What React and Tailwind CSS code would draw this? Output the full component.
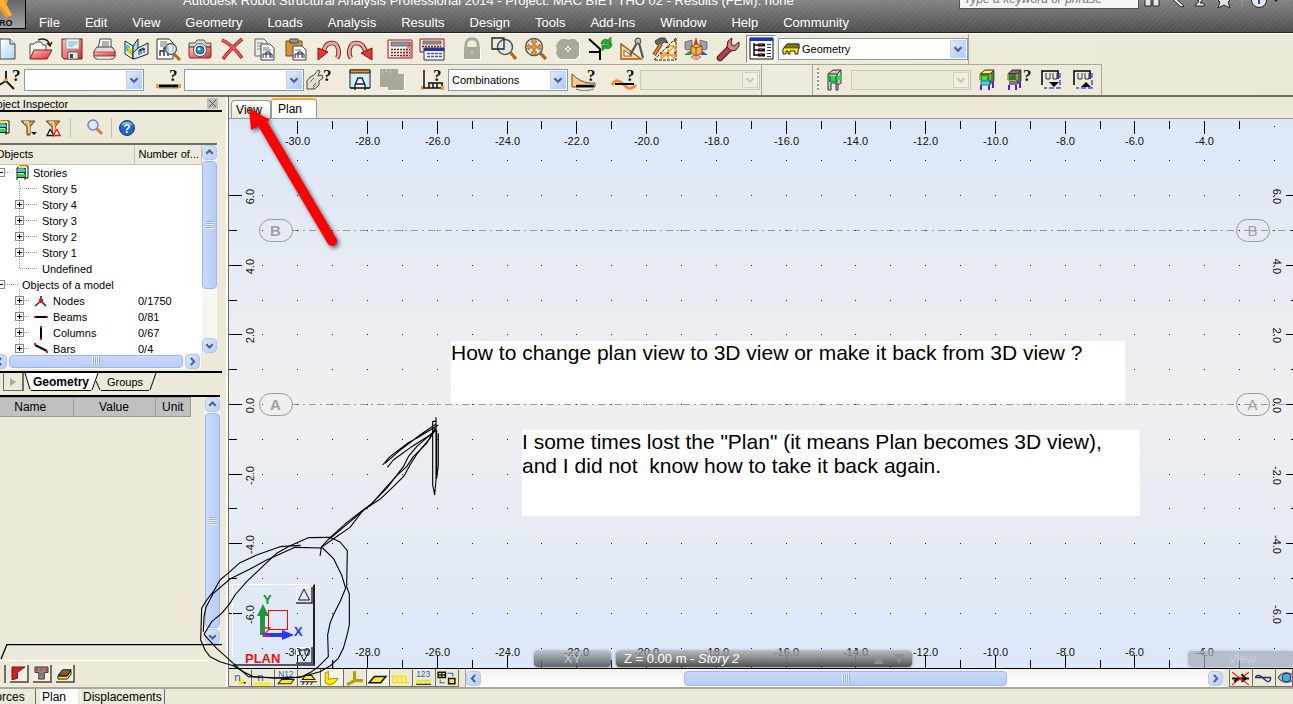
import React from "react";

const icons = {
  new: (
    <g>
      <path d="M3 1h10l5 5v15H3z" fill="url(#paper)" stroke="#444" />
      <path d="M13 1v5h5" fill="#d8e8f8" stroke="#444" />
    </g>
  ),
  open: (
    <g>
      <path d="M1 20V6h4l2-2h5l2 3h3v13z" fill="#f6fafc" stroke="#444" />
      <path d="M5 12h18l-5 9H1z" fill="url(#red)" stroke="#8d1313" />
      <path d="M9 2c5-2 10-1 12 5m-3-2 3 3 2-4" fill="none" stroke="#222" strokeWidth="1.4" />
    </g>
  ),
  save: (
    <g>
      <path d="M1 1h20v20H3l-2-2z" fill="url(#red)" stroke="#7a1515" />
      <path d="M5 1h13v10H5z" fill="#e9f4fb" stroke="#90a4b0" />
      <path d="M7 4h9M7 6h9M7 8h6" stroke="#79b2c4" />
      <path d="M7 14h10v7H7z" fill="#dfe8ee" stroke="#666" />
      <path d="M9 16h3v4H9z" fill="#444" />
    </g>
  ),
  print: (
    <g>
      <path d="M5 11 7 1h11v10z" fill="#fff" stroke="#444" />
      <path d="M9 4h7M9 6h7M9 8h7" stroke="#666" />
      <path d="M1 13l3-4h15l3 4v6l-2 2H3l-2-2z" fill="#e9d9d6" stroke="#444" />
      <path d="M1 14h21v4H1z" fill="url(#red)" stroke="#8d2525" strokeWidth=".7" />
      <path d="M4 20h14" stroke="#fff" />
    </g>
  ),
  book: (
    <g>
      <path d="M0 3l8 5v13l-8-5z" fill="#fff" stroke="#222" />
      <path d="M1 6l4 2v7l-4-2z" fill="#2ed0dd" />
      <path d="M3 9l4 3v6l-4-3z" fill="#d8cc2b" />
      <path d="M8 21V8l5-7v12z" fill="#9fdcf6" stroke="#222" />
      <path d="M8 21v-6l5-5 10-5v11l-11 4z" fill="#d6e9f5" stroke="#222" />
      <path d="M14 17v-5l5-2v5m-3 1v-5m-2 2l6-2" stroke="#234" fill="none" />
    </g>
  ),
  preview: (
    <g>
      <path d="M0 1h12l4 4v16H0z" fill="#fff" stroke="#333" />
      <path d="M3 4h7M3 6h8M3 8h6" stroke="#777" />
      <path d="M3 18v-5h4v-3h4v8M7 18v-5" stroke="#222" fill="none" strokeWidth="1.300" />
      <circle cx="14" cy="11" r="5.500" fill="#cfe7f5" fillOpacity=".7" stroke="#555" strokeWidth="1.3" />
      <path d="M17 16l6 6" stroke="#a56a22" strokeWidth="3" />
    </g>
  ),
  camera: (
    <g>
      <path d="M0 5h6l2-3h7l2 3h5v4H0z" fill="#d6d9db" stroke="#555" />
      <path d="M0 9h22v9l-1 2H1l-1-2z" fill="url(#red)" stroke="#8b2020" />
      <circle cx="11" cy="12" r="6.5" fill="#eef4f7" stroke="#555" />
      <circle cx="11" cy="12" r="4" fill="#2c86b8" stroke="#174c73" />
      <circle cx="10" cy="11" r="1.5" fill="#bfefff" />
      <path d="M17 6h4v2h-4z" fill="#fff" stroke="#666" strokeWidth=".6" />
    </g>
  ),
  del: (
    <g>
      <path d="M1 2c7 3 15 11 20 18" stroke="#7d1010" strokeWidth="3.400" fill="none" />
      <path d="M21 1C13 8 7 14 2 21" stroke="#7d1010" strokeWidth="3.400" fill="none" />
      <path d="M1 2c7 3 15 11 20 18M21 1C13 8 7 14 2 21" stroke="#f25656" strokeWidth="2" fill="none" />
    </g>
  ),
  copy: (
    <g>
      <path d="M2 1h9l3 3v14H2z" fill="#e6eef2" stroke="#666" />
      <path d="M4 5h6M4 8h5M4 11h4" stroke="#888" />
      <path d="M8 6h9l4 4v12H8z" fill="#f4fafd" stroke="#444" />
      <path d="M10 10h6M10 12h8" stroke="#777" />
      <path d="M10 20v-4h9v4M13 20v-6h4v6" stroke="#223" fill="none" />
    </g>
  ),
  paste: (
    <g>
      <path d="M1 3h16v15H1z" fill="#d6923b" stroke="#774a15" />
      <path d="M5 1h8v4H5z" fill="#999" stroke="#444" />
      <path d="M8 8h9l4 4v10H8z" fill="#f4fafd" stroke="#444" />
      <path d="M10 12h6" stroke="#777" />
      <path d="M10 20v-4h9v4M13 20v-6h4v6" stroke="#223" fill="none" />
    </g>
  ),
  undo: (
    <g>
      <path d="M20 20c3-4 2-15-5-15-6 0-7 4-9 9" fill="none" stroke="#5e2020" strokeWidth="4.600" />
      <path d="M20 20c3-4 2-15-5-15-6 0-7 4-9 9" fill="none" stroke="#f3a3a0" strokeWidth="2.800" />
      <path d="M1 10l10 4-10 8z" fill="#e33" stroke="#7a1a1a" />
    </g>
  ),
  redo: (
    <g>
      <path d="M2 20C-1 16 0 5 7 5c6 0 8 4 10 9" fill="none" stroke="#5e2020" strokeWidth="4.600" />
      <path d="M2 20C-1 16 0 5 7 5c6 0 8 4 10 9" fill="none" stroke="#f3a3a0" strokeWidth="2.800" />
      <path d="M23 10l-11 5 11 7z" fill="#e33" stroke="#7a1a1a" />
    </g>
  ),
  calc: (
    <g>
      <path d="M-1 2h24v18H-1z" fill="#f8ecea" stroke="#8b1f1f" />
      <path d="M23 2v18H10z" fill="#e05b5b" opacity=".7" />
      <path d="M2 4h19v4H2z" fill="#8c9692" stroke="#444" strokeWidth=".6" />
      <path d="M2 11.5h19M2 14.5h19M2 17.5h19" stroke="#fff" strokeWidth="2" />
      <path d="M2 11.5h19M2 14.5h19M2 17.5h19" stroke="#722" strokeWidth="1.4" strokeDasharray="2 1" />
    </g>
  ),
  calc2: (
    <g>
      <path d="M-1 1h24v13H-1z" fill="#f6dcdc" stroke="#8b1f1f" />
      <path d="M2 3h18v3H2z" fill="#8c9692" stroke="#444" strokeWidth=".6" />
      <path d="M1 8.500h19" stroke="#722" strokeWidth="1.4" strokeDasharray="2 1" />
      <path d="M3 10h20v12H3z" fill="#f3f4fb" stroke="#333" />
      <path d="M3 10h20v3H3z" fill="#2336a0" />
      <path d="M6 15.500h15M6 18.500h15" stroke="#4a57b0" strokeWidth="1.600" strokeDasharray="3 1" />
    </g>
  ),
  lock: (
    <g>
      <path d="M5 11V6c0-7 12-7 12 0v5" fill="none" stroke="#aca899" strokeWidth="3" />
      <path d="M3 9h16v12H3z" fill="#aca899" />
      <path d="M19.500 9v12.500H4" stroke="#fff" fill="none" />
      <path d="M11 13v4" stroke="#d8d5c8" />
    </g>
  ),
  zoom: (
    <g>
      <circle cx="12" cy="9" r="7.500" fill="#dfe6ea" stroke="#555" strokeWidth="1.500" />
      <path d="M-1 0h12v11H-1z" fill="none" stroke="#222" strokeWidth="1.300" />
      <path d="M17 14l6 7" stroke="#a56a22" strokeWidth="3.200" />
    </g>
  ),
  pan: (
    <g>
      <circle cx="9" cy="9" r="8.500" fill="#dce6ee" stroke="#555" strokeWidth="1.400" />
      <path d="M9 0l3 4h-2v4h4V6l4 3-4 3v-2h-4v4h2l-3 4-3-4h2v-4H4v2L0 9l4-3v2h4V4H6z" fill="#f3a427" stroke="#8c5409" strokeWidth=".7" />
      <path d="M15 15l6 6" stroke="#a56a22" strokeWidth="3.200" />
    </g>
  ),
  blob: (
    <g>
      <path d="M4 1h5l2 1 3-1h4l4 4v12l-3 4H4l-3-2-2-4 1-3-1-4 2-4z" fill="#aca899" />
      <path d="M22.500 6v12l-3 3.500H5" fill="none" stroke="#fff" strokeDasharray="3 1" />
      <path d="M11 8v2m0 2v2M8 11h2m2 0h2" stroke="#fff" strokeWidth="1.500" />
    </g>
  ),
  axes: (
    <g>
      <path d="M0 1l11 10v11M0 14h11" fill="none" stroke="#000" strokeWidth="2" />
      <path d="M12 6c0-4 4-6 7-4l3-3v7h-7l2-2c-2 0-3 1-3 2z" fill="#1fae2d" stroke="#0b6d17" strokeWidth=".6" />
      <path d="M23 6c0 4-4 6-7 4l-3 3V7h6l-2 2c2 0 3-1 3-3z" fill="#1fae2d" stroke="#0b6d17" strokeWidth=".6" />
    </g>
  ),
  triangle: (
    <g>
      <path d="M0 6v15h20z" fill="#f9d9a0" stroke="#9a5b14" strokeWidth="1.400" />
      <path d="M3 12v6h8z" fill="#fff" stroke="#9a5b14" />
      <circle cx="17" cy="3" r="3" fill="#bbb" stroke="#444" />
      <path d="M16 5L9 17M18 5l4 15" stroke="#555" strokeWidth="2.200" />
    </g>
  ),
  hammer: (
    <g>
      <path d="M23 0v22H1z" fill="#fff6e0" stroke="#222" strokeDasharray="3 1" />
      <path d="M8 21v-6h7v6m0-7V8h7v13M8 17h14M8 21l7-6 7 6M15 14l7-6" fill="none" stroke="#e79a2a" strokeWidth="1.300" />
      <path d="M7 14h2v2H7zM14 8h2v2h-2zM14 14h2v2h-2zM21 14h2v2h-2zM21 2h2v2h-2z" fill="#e22" />
      <path d="M2 3l5-3h5l3 5-4-1-2 2-3 1-3-1z" fill="#666" stroke="#222" strokeWidth=".700" />
      <path d="M8 6L1 17" stroke="#7a421a" strokeWidth="4" />
      <path d="M8 6L1 17" stroke="#d98a3d" strokeWidth="2" />
    </g>
  ),
  cube: (
    <g>
      <path d="M0 4l7-2v9l-5 1-2-1zM22 4l-7-2v9l5 1 2-1z" fill="#9aa3ab" stroke="#555" strokeWidth=".700" />
      <path d="M11 -1l2 7H9z" fill="#d22" />
      <path d="M-1 17l7-5v5z" fill="#2b9c3a" />
      <path d="M23 17l-7-5v5z" fill="#2f53d8" />
      <path d="M6 19l5 3 5-3-5-3z" fill="#f1a7a7" stroke="#c44" strokeWidth=".600" />
      <path d="M6 8l5-2 6 2v7l-6 3-5-3z" fill="#f4b14a" stroke="#8a5310" />
      <path d="M6 8l5 2 6-2M11 10v8" fill="none" stroke="#8a5310" />
    </g>
  ),
  wrench: (
    <g>
      <path d="M3 20l9-9" stroke="#4e1414" strokeWidth="6.500" strokeLinecap="round" />
      <path d="M3 20l9-9" stroke="#a84848" strokeWidth="4.500" strokeLinecap="round" />
      <path d="M15 0l-4 3-1 6 4 4 5-1 3-4V4l-5 4-2-1-1-2z" fill="#d58784" stroke="#4e1414" />
    </g>
  ),
  tree: (
    <g>
      <path d="M0 0h23v21H0z" fill="#fff" stroke="#111" />
      <path d="M0 0h23v3H0z" fill="#1533c8" />
      <path d="M4 5v13M4 7h5M4 12h5M4 17h5" stroke="#000" fill="none" strokeWidth="1.400" />
      <path d="M8 7h7M8 12h7M8 17h7" stroke="#000" strokeWidth="3" />
      <path d="M9 6h3M9 11h3M9 16h3" stroke="#e23" strokeWidth="1.500" />
      <path d="M17 6.500h4M17 9.500h4M17 12.500h4M17 15.500h4M17 18.500h4" stroke="#1533c8" />
    </g>
  ),
  nodeQ: (
    <g>
      <path d="M9 2v8M9 12L2 16M9 12l8 8" stroke="#111" strokeWidth="1.800" />
      <circle cx="9" cy="11" r="1.800" fill="#f08a1d" />
    </g>
  ),
  barQ: (
    <g>
      <path d="M1 17h21" stroke="#000" strokeWidth="3" />
      <path d="M-1 15h3v4h-3zM21 15h3v4h-3z" fill="#f39a2b" />
      <path d="M2 19.500h19" stroke="#b9b5a5" />
    </g>
  ),
  hand: (
    <g>
      <path d="M-2 20v-8l3-4 4-2 4-5 2 1-2 5 4-1 1 3-4 3v4l-4 4z" fill="#e3dfcf" stroke="#444" />
      <path d="M1 13l4-4M4 17l3-3M3 20l4-4" stroke="#666" />
    </g>
  ),
  win: (
    <g>
      <path d="M1 1h20v18H1z" fill="#c9effa" stroke="#222" />
      <path d="M1 1h20v3H1z" fill="#f08d2d" stroke="#222" />
      <path d="M6 21v-5l3-7h4l3 7v5M6 15h10M1 19h20" fill="#fff" fillOpacity=".5" stroke="#222" strokeWidth="1.400" />
    </g>
  ),
  grey: (
    <g>
      <path d="M-1 0h18v5h6v16H7v-3H-1z" fill="#aca899" />
      <path d="M23.500 6v15.500H9" fill="none" stroke="#fff" />
      <path d="M1 3h1M5 2h1M9 3h1" stroke="#fff" />
    </g>
  ),
  loadQ: (
    <g>
      <path d="M3 1v18M0 19h22M7 14h15M8 14v5M12 14v5M16 14v5M21 14v5" stroke="#111" strokeWidth="1.500" fill="none" />
      <path d="M0 17h2v4H0zM20 17h3v4h-3z" fill="#f39a2b" />
    </g>
  ),
  momentQ: (
    <g>
      <path d="M-1 5v13h23v-4C12 15 5 11-1 5z" fill="#f6c98a" stroke="#7a4a12" />
      <path d="M3 17h18" stroke="#000" strokeWidth="2.400" />
      <path d="M3 20c5 2 12 2 18 0" fill="none" stroke="#777" />
    </g>
  ),
  deflQ: (
    <g>
      <path d="M-1 16c4-7 8-4 12 0s7 5 12 0" fill="none" stroke="#f08d2d" strokeWidth="3" />
      <path d="M2 15h19" stroke="#000" strokeWidth="2" />
    </g>
  ),
  frameG: (
    <g>
      <path d="M4 5l5-4h8v13l-3 2v5h-2v-7H7v7H4z" fill="#c3c7bf" stroke="#333" />
      <path d="M4 5h9l4-4M13 5v11" fill="none" stroke="#333" />
      <path d="M5 7h8v6H5z" fill="#1b9a32" />
      <path d="M7 7h4v5H7z" fill="#1fe04a" />
      <path d="M13 8l4-2v4l-4 2z" fill="#1fe04a" />
    </g>
  ),
  frameY: (
    <g>
      <path d="M4 5l5-4h9l-4 4z" fill="#fbf04a" stroke="#333" />
      <path d="M4 5h10v6H4zM14 5l4-4v11l-4 3z" fill="#2c8b45" stroke="#333" strokeWidth=".800" />
      <path d="M4 5v6M14 5v6" stroke="#e8a325" strokeWidth="1.500" />
      <path d="M6 7h5v4H6z" fill="#2df32d" />
      <path d="M5 12h9v4H5z" fill="#28e3e9" stroke="#155" strokeWidth=".700" />
      <path d="M5 16v5M13 16v5M17 13v6" stroke="#6d10d8" strokeWidth="2" />
    </g>
  ),
  frameQ: (
    <g>
      <path d="M0 5l4-4h9l-4 4z" fill="#777" stroke="#333" />
      <path d="M0 5h9v6H0zM9 5l4-4v11l-4 3z" fill="#5c6a58" stroke="#333" strokeWidth=".800" />
      <path d="M0 5v6M9 5v6" stroke="#e8a325" strokeWidth="1.500" />
      <path d="M2 7h5v4H2z" fill="#118a1b" />
      <path d="M1 12h8v4H1z" fill="#777" />
      <path d="M1 16v5M8 16v5M12 13v6" stroke="#6d10d8" strokeWidth="2" />
    </g>
  ),
  boxDown: (
    <g>
      <path d="M2 16V2h16v8" fill="none" stroke="#000" strokeWidth="1.500" />
      <path d="M20 4v15H4" fill="none" stroke="#4a4cf5" strokeWidth="1.500" strokeDasharray="5 2" />
      <path d="M6 4v6h4V4m3 0v6h4V4" fill="none" stroke="#335" />
      <path d="M9 13h10l-5 5z" fill="#000" />
    </g>
  ),
  boxUp: (
    <g>
      <path d="M2 16V2h16v8" fill="none" stroke="#000" strokeWidth="1.500" />
      <path d="M20 4v15H4" fill="none" stroke="#4a4cf5" strokeWidth="1.500" strokeDasharray="5 2" />
      <path d="M6 4v6h4V4m3 0v6h4V4" fill="none" stroke="#335" />
      <path d="M9 18h10l-5-5z" fill="#000" />
    </g>
  ),
};

const withMark = { nodeQ: 15, barQ: 12, hand: 14, loadQ: 12, momentQ: 14, deflQ: 13, frameQ: 15 };

function Icon({ name }) {
  return (
    <svg width="22" height="22" viewBox="0 0 22 22" className="shrink-0 overflow-visible" aria-hidden="true">
      {icons[name]}
      {name in withMark && (
        <text x={withMark[name]} y="12" fontFamily="Liberation Serif, serif" fontWeight="700" fontSize="17" fill="#111">
          ?
        </text>
      )}
    </svg>
  );
}

function Tool({ name, label }) {
  return (
    <button aria-label={label} className="flex h-7 w-8 shrink-0 items-center justify-center">
      <Icon name={name} />
    </button>
  );
}

function Chevron({ d = "M4 5l4 4 4-4" }) {
  return (
    <svg width="15" height="15" viewBox="0 0 16 15" aria-hidden="true">
      <path d={d} fill="none" stroke="currentColor" strokeWidth="2.500" />
    </svg>
  );
}

function Combo({ label, value = "", width, disabled, icon }) {
  return (
    <div
      className={`flex shrink-0 items-center border p-px ${width} ${
        disabled ? "h-5 border-[#c9c7ba] bg-[#ece9d8]" : "h-[22px] border-[#7f9db9] bg-white"
      }`}
    >
      {icon}
      <select
        aria-label={label}
        disabled={disabled}
        className="h-full min-w-0 flex-1 appearance-none bg-transparent px-0.5 text-[11px] leading-4 text-black outline-none"
      >
        <option>{value}</option>
      </select>
      <span
        className={`flex h-full w-4 shrink-0 items-center justify-center border ${
          disabled
            ? "border-[#d6d3c6] bg-[#f0eee3] text-[#c9c7ba]"
            : "border-[#c3d3fb] bg-linear-to-br from-[#e1eafe] to-[#aec8f7] text-[#4d6185]"
        }`}
      >
        <Chevron />
      </span>
    </div>
  );
}

function ScrollButton({ label, d }) {
  return (
    <button
      aria-label={label}
      className="flex h-[15px] w-[15px] shrink-0 items-center justify-center rounded-sm border border-[#b4c8f4] bg-linear-to-br from-[#dce6fd] to-[#b7cdf9] text-[#4d6185]"
    >
      <Chevron d={d} />
    </button>
  );
}

const UP = "M4 9l4-4 4 4";
const DOWN = "M4 6l4 4 4-4";
const LEFT = "M10 3L6 7.500l4 4.500";
const RIGHT = "M6 3l4 4.500-4 4.500";

function Grip({ vertical }) {
  return vertical ? (
    <span className="h-2 w-2 bg-[repeating-linear-gradient(0deg,#eef4fe_0_1px,#8cb0f8_1px_2px)]" />
  ) : (
    <span className="h-2 w-2 bg-[repeating-linear-gradient(90deg,#eef4fe_0_1px,#8cb0f8_1px_2px)]" />
  );
}

function VScroll({ thumb }) {
  return (
    <div className="flex w-[15px] shrink-0 flex-col bg-[#f7f6f1]">
      <ScrollButton label="Scroll up" d={UP} />
      <div className="min-h-0 flex-1 py-px">
        <div className={`flex items-center justify-center rounded-sm border border-[#9db8ee] bg-linear-to-r from-[#cad9fd] to-[#b8ccf8] ${thumb}`}>
          <Grip vertical />
        </div>
      </div>
      <ScrollButton label="Scroll down" d={DOWN} />
    </div>
  );
}

const menus = ["File", "Edit", "View", "Geometry", "Loads", "Analysis", "Results", "Design", "Tools", "Add-Ins", "Window", "Help", "Community"];

function Header() {
  return (
    <header className="flex h-[33px] shrink-0 overflow-hidden border-b border-[#222] bg-[repeating-linear-gradient(135deg,#ffffff0d_0_1px,transparent_1px_4px),linear-gradient(#848484,#6a6a6a_50%,#4e4e4e)] text-white">
      <div className="h-[29px] w-[26px] shrink-0 overflow-hidden border-r border-b border-black bg-linear-to-b from-[#666] to-[#a4a4a4]">
        <svg width="26" height="28" viewBox="0 0 26 28" aria-label="Robot PRO" role="img">
          <path d="M0 0h8L6 6l6 9-6 3-6-8z" fill="#ee9a1c" />
          <path d="M0 0h4l8 15-3 1L0 5z" fill="#f8b43a" />
          <text x="-7" y="26" fontFamily="Liberation Sans, Arial, sans-serif" fontWeight="700" fontSize="9" fill="#111">
            PRO
          </text>
        </svg>
      </div>
      <div className="flex min-w-0 flex-1 flex-col">
        <div className="flex h-[13px] items-end justify-between">
          <h1 className="mb-1 ml-[157px] text-[13px] leading-4 whitespace-pre">
            Autodesk Robot Structural Analysis Professional 2014 - Project: MAC BIET THO 02 - Results (FEM): none
          </h1>
          <div className="mb-1 flex items-end">
            <input
              aria-label="Search"
              placeholder="Type a keyword or phrase"
              className="h-5 w-[180px] border border-[#555] bg-[#f4f4f4] px-1 text-[12px] italic placeholder:text-[#777]"
            />
            <svg width="154" height="20" viewBox="0 0 154 20" aria-hidden="true">
              <g fill="#e8e8e8" stroke="#222" strokeWidth="1">
                <path d="M6 17v-6l2-3h4v9zM14 17V8h4l2 3v6z" />
                <path d="M31 8l3-1 11 10-3 1z" />
                <path d="M56 17h10l-2-3h-3l4-5-6-3-2 4 3 2z" />
                <path d="M85 2l2 7h6l-4 4 2 6-6-3-6 3 2-6-4-4h6z" />
                <circle cx="120" cy="11" r="7.500" />
              </g>
              <path d="M103 0v18" stroke="#999" />
              <path d="M120 9v6M120 5v2" stroke="#1d4fb5" strokeWidth="2" />
              <path d="M134 10h6l-3 3z" fill="#222" />
            </svg>
          </div>
        </div>
        <nav className="ml-[13px] flex gap-[25px] text-[13px] leading-5">
          {menus.map((m) => (
            <button key={m}>{m}</button>
          ))}
        </nav>
      </div>
    </header>
  );
}

const t1 = [["new", "New"], ["open", "Open"], ["save", "Save"], ["print", "Print"], ["book", "Printout composition"], ["preview", "Print preview"], ["camera", "Screen capture"], ["del", "Delete"], ["copy", "Copy"], ["paste", "Paste"], ["undo", "Undo"], ["redo", "Redo"]];
const t2 = [["calc", "Calculations"], ["calc2", "Calculation options"]];
const t3 = [["lock", "Lock"], ["zoom", "Zoom window"], ["pan", "Zoom all"], ["blob", "Restore"], ["axes", "Rotate axes"], ["triangle", "Edit"], ["hammer", "Analysis"], ["cube", "Attributes"], ["wrench", "Tools"]];

function Toolbars() {
  const draw = (list) => list.map(([n, l]) => <Tool key={n} name={n} label={l} />);
  return (
    <div className="shrink-0 overflow-hidden border-t border-b-2 border-t-white border-b-[#716f64] bg-linear-to-r from-[#f0eddf] to-[#ece9d8]">
      <div className="flex h-[30px] items-center">
        <div className="-ml-2 flex">{draw(t1)}</div>
        <div className="ml-2 flex">{draw(t2)}</div>
        <div className="ml-2 flex">{draw(t3)}</div>
        <button aria-label="Object inspector" className="ml-0.5 flex h-7 w-[30px] shrink-0 items-center justify-center border border-[#8a887c] border-r-white border-b-white bg-[#f4f2e8]">
          <Icon name="tree" />
        </button>
        <div className="ml-0.5 flex h-full items-center border-r border-[#aca899]">
          <Combo
            label="Layout"
            value="Geometry"
            width="w-[190px]"
            icon={
              <svg width="18" height="14" viewBox="0 0 18 14" className="ml-0.5 shrink-0" aria-hidden="true">
                <path d="M1 7l4-5h12v5l-1 1v4h-3V9H8v3H6V9H4v3H1z" fill="#ffef10" stroke="#222" />
                <path d="M5 2h12v4H2z" fill="#7c7a10" stroke="#222" strokeWidth=".6" />
              </svg>
            }
          />
        </div>
      </div>
      <div className="flex h-[31px] w-[1102px] items-center border-t border-r border-[#aca899]">
        <div className="-ml-2 flex"><Tool name="nodeQ" label="Select nodes" /></div>
        <Combo label="Nodes" width="w-[120px]" />
        <div className="ml-2 flex"><Tool name="barQ" label="Select bars" /></div>
        <Combo label="Bars" width="w-[120px]" />
        <Tool name="hand" label="Select special" />
        <div className="ml-2 flex">
          <Tool name="win" label="Filter" />
          <Tool name="grey" label="Restore selection" />
        </div>
        <div className="ml-2 flex"><Tool name="loadQ" label="Select cases" /></div>
        <Combo label="Cases" value="Combinations" width="w-[120px]" />
        <Tool name="momentQ" label="Select modes" />
        <div className="ml-2 flex"><Tool name="deflQ" label="Select components" /></div>
        <Combo label="Components" width="w-[120px]" disabled />
        <div className="ml-px h-full w-[52px] shrink-0 border-x border-[#aca899] bg-[#eeebdc]" />
        <div className="ml-1 h-6 w-0.5 shrink-0 bg-[repeating-linear-gradient(#9a988c_0_2px,#fff_2px_4px)]" />
        <Tool name="frameG" label="Story" />
        <Combo label="Stories" width="w-[120px]" disabled />
        <Tool name="frameY" label="Show story" />
        <Tool name="frameQ" label="Story selection" />
        <Tool name="boxDown" label="Story down" />
        <Tool name="boxUp" label="Story up" />
      </div>
    </div>
  );
}

const DOT = { stroke: "#999", strokeDasharray: "1 1", fill: "none" };

function Expander({ x, minus }) {
  return (
    <g>
      <rect x={x - 4 + 0.5} y="3.500" width="8" height="8" fill="#fff" stroke="#8c8a7e" />
      <path d={minus ? `M${x - 2} 7.500h5` : `M${x - 2} 7.500h5M${x + 0.5} 5v5`} stroke="#000" />
    </g>
  );
}

const glyphs = {
  node: <path d="M41 3v5l-6 5M41 8l5 5" stroke="#222" strokeWidth="1.500" fill="none" />,
  beam: <path d="M35 8h12" stroke="#000" strokeWidth="2" />,
  column: <path d="M41 2v12" stroke="#000" strokeWidth="2" />,
  bar: <path d="M35 4l12 6" stroke="#000" strokeWidth="2" />,
};
const tips = {
  node: "M39 6h4v4h-4z",
  beam: "M34 7h2v2h-2zM46 7h2v2h-2z",
  column: "M40 1h2v2h-2zM40 13h2v2h-2z",
  bar: "M34 2h2v2h-2zM46 10h2v2h-2z",
};

function StoryIcon() {
  return (
    <g>
      <path d="M17 3l3-2h8v12h-3V3zM17 3v12M25 3v12" fill="#fff" stroke="#111" />
      <path d="M18 2l2-1h7l-2 2h-7z" fill="#ffef1f" />
      <path d="M18 4h7v3h-7z" fill="#19d8e8" />
      <path d="M18 9h7v3h-7z" fill="#20e030" />
      <path d="M17 7.500h8M17 12.500h8" stroke="#111" />
    </g>
  );
}

const tree = [
  { label: "Stories", kind: "root" },
  { label: "Story 5", kind: "leaf" },
  { label: "Story 4", kind: "story" },
  { label: "Story 3", kind: "story" },
  { label: "Story 2", kind: "story" },
  { label: "Story 1", kind: "story" },
  { label: "Undefined", kind: "last" },
  { label: "Objects of a model", kind: "model" },
  { label: "Nodes", kind: "object", glyph: "node", count: "0/1750" },
  { label: "Beams", kind: "object", glyph: "beam", count: "0/81" },
  { label: "Columns", kind: "object", glyph: "column", count: "0/67" },
  { label: "Bars", kind: "object", glyph: "bar", count: "0/4" },
];

const rowWidth = { root: 33, leaf: 42, story: 42, last: 42, model: 22, object: 53 };

function RowArt({ kind, glyph }) {
  const w = rowWidth[kind];
  return (
    <svg width={w} height="16" viewBox={`0 0 ${w} 16`} className="shrink-0" aria-hidden="true">
      {kind === "root" && (<><path d="M5 7.500h6" {...DOT} /><Expander x={0} minus /><StoryIcon /></>)}
      {kind === "model" && (<><path d="M5 7.500h13M19.500 12v4" {...DOT} /><Expander x={0} minus /></>)}
      {kind === "leaf" && <path d="M19.500 0v16M20 7.500h18" {...DOT} />}
      {kind === "last" && <path d="M19.500 0v8M20 7.500h18" {...DOT} />}
      {kind === "story" && (<><path d="M19.500 0v16M20 7.500h18" {...DOT} /><Expander x={19} /></>)}
      {kind === "object" && (
        <>
          <path d="M19.500 0v16M20 7.500h10" {...DOT} />
          <Expander x={19} />
          {glyphs[glyph]}
          <path d={tips[glyph]} fill="#e11" />
        </>
      )}
    </svg>
  );
}

function Inspector() {
  return (
    <aside className="flex w-[228px] shrink-0 flex-col overflow-hidden border-r-2 border-white text-[11px]">
      <div className="mr-1 flex h-[15px] items-center justify-between border-b-2 border-black">
        <h2 className="-ml-3 leading-3">Object Inspector</h2>
        <button aria-label="Close" className="mr-1 flex h-[11px] w-[11px] items-center justify-center bg-[#c0bfb8]">
          <svg width="7" height="7" viewBox="0 0 7 7"><path d="M0 0l7 7M7 0L0 7" stroke="#555" /></svg>
        </button>
      </div>
      <div className="flex h-[31px] items-center">
        <button aria-label="Stories" className="w-4">
          <svg width="10" height="16" viewBox="19 0 10 16"><StoryIcon /></svg>
        </button>
        {["Filter", "Filter selection"].map((l, i) => (
          <button key={l} aria-label={l} className="flex w-[25px] justify-center">
            <svg width="18" height="18" viewBox="0 0 18 18">
              <path d="M1 2h14l-5 6v8H7V8z" fill="#c79a4b" stroke="#6b4815" />
              <path d="M4 3h4l1 5v6" fill="none" stroke="#f6e0ac" strokeWidth="1.500" />
              {i === 0 ? (
                <path d="M11 13h6l-3 3z" fill="#111" />
              ) : (
                <>
                  <path d="M2 16.500l3-6 4 6z" fill="#fff" stroke="#111" strokeWidth="1.300" />
                  <path d="M8 16.500l4-6 3 6z" fill="#fff" stroke="#d11" strokeWidth="1.300" />
                </>
              )}
            </svg>
          </button>
        ))}
        <span className="ml-1 h-5 w-px bg-[#c5c2b2]" />
        <button aria-label="Find" className="ml-4 w-4">
          <svg width="17" height="17" viewBox="0 0 17 17">
            <path d="M9 9l6 6" stroke="#c48a2b" strokeWidth="3" />
            <circle cx="6" cy="6" r="5" fill="#d9e8fb" stroke="#7388b8" strokeWidth="1.500" />
          </svg>
        </button>
        <span className="ml-2 h-5 w-px bg-[#c5c2b2]" />
        <button aria-label="Help" className="ml-[7px]">
          <svg width="16" height="16" viewBox="0 0 16 16">
            <circle cx="8" cy="8" r="7.500" fill="#2563c4" stroke="#123c86" />
            <path d="M3 5a6 5 0 0 1 10 0" stroke="#8fb8f0" strokeWidth="2" fill="none" />
            <text x="8" y="12.500" textAnchor="middle" fontFamily="Liberation Sans, sans-serif" fontWeight="700" fontSize="12" fill="#fff">?</text>
          </svg>
        </button>
      </div>
      <div className="mr-[9px] flex border-t-2 border-[#716f64] bg-white">
        <div className="h-[208px] min-w-0 flex-1 overflow-hidden">
          <table className="w-full table-fixed border-collapse text-left">
            <thead>
              <tr className="h-[19px] border-b border-[#cbc7b8] bg-[#ebeadb]">
                <th className="w-[134px] border-r border-[#c5c2b2] p-0 font-normal">
                  <span className="-ml-1">Objects</span>
                </th>
                <th className="border-r border-[#c5c2b2] p-0 pl-1 font-normal whitespace-nowrap">Number of...</th>
              </tr>
            </thead>
            <tbody>
              {tree.map((r) => (
                <tr key={r.label} className="h-4">
                  <td className="p-0">
                    <div className="flex h-4 items-center leading-4">
                      <RowArt kind={r.kind} glyph={r.glyph} />
                      <span className="whitespace-nowrap">{r.label}</span>
                    </div>
                  </td>
                  <td className="p-0 pl-1 leading-4">{r.count}</td>
                </tr>
              ))}
            </tbody>
          </table>
        </div>
        <VScroll thumb="h-[128px]" />
      </div>
      <div className="mr-[9px] flex h-4 items-center">
        <div className="flex h-full flex-1 items-center overflow-hidden bg-[#f7f6f1]">
          <div className="-ml-2 flex"><ScrollButton label="Scroll left" d={LEFT} /></div>
          <div className="ml-0.5 flex h-[13px] w-[174px] items-center justify-center rounded-sm border border-[#9db8ee] bg-linear-to-b from-[#cad9fd] to-[#b8ccf8]"><Grip /></div>
          <div className="ml-0.5 flex"><ScrollButton label="Scroll right" d={RIGHT} /></div>
        </div>
        <div className="w-4" />
      </div>
      <div className="mt-0.5 mr-1 flex h-5 items-stretch border-t-2 border-black">
        <button aria-label="Previous tab" className="w-1 border-r border-[#716f64]" />
        <button aria-label="Next tab" className="flex w-5 items-center justify-center border-r-2 border-b border-[#716f64]">
          <svg width="6" height="8" viewBox="0 0 6 8"><path d="M0 0l6 4-6 4z" fill="#aca899" /></svg>
        </button>
        <svg width="7" height="17" viewBox="0 0 7 17"><path d="M0 0h7v17H6z" fill="#fff" /><path d="M1 0l5 16.500" stroke="#000" fill="none" /></svg>
        <button className="border-b border-black bg-white px-0.5 text-[12px] leading-4 font-bold">Geometry</button>
        <svg width="10" height="18" viewBox="0 0 10 18"><path d="M0 0h7L2 17H0z" fill="#fff" /><path d="M7 0L1 17M5 8l4 9" stroke="#000" fill="none" /></svg>
        <button className="border-b border-black px-1.5 leading-4">Groups</button>
        <svg width="8" height="18" viewBox="0 0 8 18"><path d="M7 0L1 17" stroke="#000" fill="none" /></svg>
      </div>
      <div className="mt-1 mr-1.5 flex min-h-0 flex-1 justify-between border-t-2 border-black">
        <table className="h-5 w-[191px] table-fixed border-collapse bg-[#c0c0c0] text-[12px]">
          <thead>
            <tr className="border border-[#9a9a9a] border-l-0">
              <th className="w-[73px] border-r border-[#9a9a9a] p-0 pr-3 font-normal">Name</th>
              <th className="w-[82px] border-r border-[#9a9a9a] p-0 font-normal">Value</th>
              <th className="p-0 font-normal">Unit</th>
            </tr>
          </thead>
        </table>
        <VScroll thumb="h-full" />
      </div>
      <svg width="222" height="16" viewBox="0 0 222 16" className="shrink-0" aria-hidden="true">
        <path d="M1 15L7 .500h215" fill="none" stroke="#000" strokeWidth="1.300" />
      </svg>
      <div className="flex h-[27px] items-center gap-1 border-t border-white pl-1">
        <span className="h-[18px] w-0.5 border-r-2 border-[#716f64] bg-white" />
        {[
          <path key="a" d="M1 1h14L7 7v6l-6 2z" fill="#c22" stroke="#711" />,
          <g key="b"><path d="M1 1h14v6h-4v7H5V7H1z" fill="#888" stroke="#333" /><path d="M2 3h2v2H2zM7 3h2v2H7zM12 3h2v2h-2zM7 8h2v2H7z" fill="#e22" /></g>,
          <g key="c"><path d="M1 10l5-6h9l-4 6z" fill="#1a9c3a" stroke="#111" /><path d="M4 9l3-4h5l-3 4z" fill="#e22" /><path d="M1 11h10l4-6v4l-4 5H1z" fill="#ffee00" stroke="#111" /></g>,
        ].map((g, i) => (
          <button key={i} aria-label={["Section", "Profile", "Map"][i]} className="flex h-[18px] w-[19px] items-center justify-center border-r-2 border-b-2 border-[#716f64] bg-[#f3f1e6]">
            <svg width="15" height="14" viewBox="0 0 16 15">{g}</svg>
          </button>
        ))}
      </div>
    </aside>
  );
}

const range = (a, b) => Array.from({ length: b - a + 1 }, (_, i) => a + i);
const gx = (v) => Math.round(68.3 + (v + 30) * 34.88) + 0.5;
const gy = (v) => Math.round(285 - 34.8 * v) + 0.5;
const even = (v) => v % 2 === 0;
const fmt = (v) => v.toFixed(1);

function AxisBubble({ x, y, weight, children }) {
  return (
    <g>
      <rect x={x} y={y - 11} width="33" height="22" rx="11" fill="none" stroke="#999" />
      <text x={x + 16} y={y + 5} textAnchor="middle" fontSize="15" fontWeight={weight} fill="#a0a0a0">{children}</text>
    </g>
  );
}

function Grid() {
  return (
    <svg className="block h-full w-full" fontFamily="Liberation Sans, Arial, sans-serif" fontSize="11" fill="#111" aria-label="Plan view">
      {[["B", 5], ["A", 0]].map(([n, v]) => (
        <g key={n}>
          <line x1="63" x2="100%" y1={gy(v)} y2={gy(v)} stroke="#999" strokeDasharray="7 4 2 4" />
          <AxisBubble x={30.5} y={gy(v)} weight="700">{n}</AxisBubble>
          <svg x="100%" className="overflow-visible"><AxisBubble x={-56.5} y={gy(v)} weight="400">{n}</AxisBubble></svg>
        </g>
      ))}
      {range(-7, 8).map((r) => range(-31, -2).map((c) => <rect key={`${r},${c}`} x={gx(c) - 0.5} y={gy(r) - 0.5} width="1" height="1" fill="#00f" />))}
      <g stroke="#000">
        {range(-30, -3).map((v) => <path key={v} d={`M${gx(v)} 2V${even(v) ? 15 : 10}`} />)}
        {range(-6, 6).map((v) => <path key={v} d={`M0 ${gy(v)}H${even(v) ? 13 : 8}`} />)}
      </g>
      {range(-30, -4).filter(even).map((v) => <text key={v} x={gx(v)} y="26" textAnchor="middle">{fmt(v)}</text>)}
      {range(-6, 6).filter(even).map((v) => <text key={v} textAnchor="middle" transform={`translate(25 ${gy(v) + 1}) rotate(-90)`}>{fmt(v)}</text>)}
      <svg x="100%" className="overflow-visible">
        {range(-6, 6).map((v) => <path key={v} stroke="#000" d={`M0 ${gy(v)}H${even(v) ? -7 : -2}`} />)}
        {range(-6, 6).filter(even).map((v) => <text key={v} textAnchor="middle" transform={`translate(-20 ${gy(v) + 1}) rotate(90)`}>{fmt(v)}</text>)}
      </svg>
      <svg y="100%" className="overflow-visible">
        {range(-30, -3).map((v) => <path key={v} stroke="#000" d={`M${gx(v)} 0V${even(v) ? -13 : -8}`} />)}
        {range(-30, -4).filter(even).map((v) => <text key={v} x={gx(v)} y="-12" textAnchor="middle">{fmt(v)}</text>)}
      </svg>
    </svg>
  );
}

function ViewPanel() {
  return (
    <div className="absolute bottom-0.5 left-[3px] h-[82px] w-[83px] border border-r-2 border-b-2 border-white border-r-[#222] border-b-[#555]">
      <svg width="80" height="79" viewBox="0 0 80 79" fontFamily="Liberation Sans, Arial, sans-serif" aria-label="Plan orientation">
        <text x="30" y="19" fontSize="13" fontWeight="700" fill="#0c9528">Y</text>
        <path d="M27 50V31h-3l6-12 6 12h-4v19z" fill="#229540" />
        <path d="M30 48h19v-3l12 5-12 5v-3H30z" fill="#2a35ff" />
        <path d="M30 43h7l-7 8h7" fill="none" stroke="#c2355b" strokeWidth="1.300" />
        <rect x="35.500" y="25.500" width="19" height="19" fill="none" stroke="#f00" />
        <text x="61" y="51" fontSize="13" fontWeight="700" fill="#2a35ff">X</text>
        <text x="12" y="78" fontSize="13" fontWeight="700" fill="#f20d0d">PLAN</text>
        <path d="M63.500 2.500h15v15h-15zM63.500 62.500h15v15h-15z" fill="none" stroke="#fff" />
        <path d="M63 18h16V2M63 78h16V62" fill="none" stroke="#333" strokeWidth="1.500" />
        <path d="M65.500 15L71 4l5.500 11zM65.500 65h11L71 76z" fill="none" stroke="#111" />
      </svg>
    </div>
  );
}

const viewTools = [
  ["Node numbers", <g key="n"><path d="M10 12h6" stroke="#111" strokeWidth="1.500" /><path d="M9 9h5v4H9z" fill="#fe0" /></g>, "n"],
  ["Bar numbers", <path key="b" d="M2 13h16" stroke="#fe0" strokeWidth="2.500" />, "n"],
  ["Panel numbers", <path key="p" d="M3 13l3-4h12l-3 4z" fill="#fe0" stroke="#222" />, "N12"],
  ["Supports", <path key="s" d="M4 9l3-4h6l3 4zM2 11h16M4 14l2-3m2 3l2-3m2 3l2-3" fill="#fe0" stroke="#222" />, ""],
  ["Profiles", <path key="f" d="M4 3l3-2v8l3-1h6l-3 4-5 2-4-2z" fill="#fe0" stroke="#b59b00" />, ""],
  ["Local systems", <path key="l" d="M10 1v9L3 14M10 10h8" fill="none" stroke="#b0a200" strokeWidth="3" />, ""],
  ["Panels", <path key="q" d="M2 12l5-6h11l-5 6z" fill="#fe0" stroke="#111" strokeWidth="1.500" />, ""],
  ["Loads", <path key="o" d="M2 12h16M3 12V6h12v5m-8-5v6m4-6v6" fill="none" stroke="#f4e600" strokeWidth="1.600" />, ""],
  ["Load values", <g key="v"><path d="M4 13v-3h12v3M8 10v3m4-3v3" fill="none" stroke="#f4e600" strokeWidth="1.500" /><path d="M3 13.500h14" stroke="#111" /></g>, "123"],
  ["Display", <g key="d"><path d="M2 2h7v5H2zM12 8h6v5h-6z" fill="#fe0" stroke="#111" strokeWidth="1.400" /><path d="M2 4.500h7M5.500 2v5" stroke="#111" /><path d="M11 3h5v3M8 12H4v-3" fill="none" stroke="#26c" /></g>, ""],
];

function ViewBar() {
  return (
    <div className="flex h-[19px] shrink-0 items-stretch border-t border-black">
      {viewTools.map(([label, art, txt], i) => (
        <button
          key={label}
          aria-label={label}
          className={`w-[23px] shrink-0 overflow-hidden border-r border-b border-[#716f64] ${i === 4 || i === 6 ? "bg-[#f6f4ea]" : "bg-[#ece9d8]"}`}
        >
          <svg width="21" height="16" viewBox="0 0 20 15" aria-hidden="true">
            {art}
            <text x={txt.length > 1 ? 3 : 5} y={txt.length > 1 ? 7 : 10} fontFamily="Liberation Sans, Arial, sans-serif" fontSize={txt.length > 1 ? 8 : 11} fill="#1b5fc4">{txt}</text>
          </svg>
        </button>
      ))}
      <div className="w-[7px] shrink-0 border-r border-[#aca899]" />
      <div className="flex min-w-0 flex-1 items-center bg-linear-to-b from-[#f3f1ea] to-white">
        <ScrollButton label="Scroll left" d={LEFT} />
        <div className="grow-[203] basis-0" />
        <div className="flex h-[15px] grow-[322] basis-0 items-center justify-center rounded-sm border border-[#9db8ee] bg-linear-to-b from-[#cad9fd] to-[#b5cbf8]"><Grip /></div>
        <div className="grow-[201] basis-0" />
        <ScrollButton label="Scroll right" d={RIGHT} />
      </div>
      <div className="w-[7px] shrink-0 border-r border-[#716f64]" />
      {[
        <g key="x"><path d="M2 8h16M11 4l4 4-4 3M4 11l4-3" stroke="#111" strokeWidth="2" fill="none" /><path d="M2 2l16 12M18 2L2 14" stroke="#e11" /></g>,
        <path key="w" d="M2 7h15M2 7c3-4 6-1 8 1s6 6 7-1" fill="none" stroke="#236" strokeWidth="1.300" />,
        <g key="e"><path d="M2 7c4-6 12-6 16 0-4 6-12 6-16 0z" fill="#bbb" stroke="#446" /><circle cx="10" cy="7" r="4" fill="#18c6d8" stroke="#707" /></g>,
      ].map((g, i) => (
        <button key={i} aria-label={["Hide results", "Diagrams", "Visibility"][i]} className={`shrink-0 overflow-hidden border-r border-b border-[#716f64] ${i === 2 ? "w-[17px]" : "w-[23px]"}`}>
          <svg width="21" height="16" viewBox="0 0 20 15" aria-hidden="true">{g}</svg>
        </button>
      ))}
    </div>
  );
}

function Workspace() {
  return (
    <main className="flex min-w-0 flex-1 flex-col border-l border-[#716f64]">
      <div className="flex h-[22px] shrink-0 items-end border-b border-[#919b9c] text-[12px]">
        <button className="ml-0.5 h-[18px] w-10 rounded-t-sm border border-b-0 border-[#919b9c] bg-linear-to-b from-white to-[#e9e6d8] pr-1 leading-4">View</button>
        <button className="h-5 w-[46px] rounded-t-sm border border-t-2 border-b-0 border-[#919b9c] border-t-[#ffa82d] bg-white pr-2 leading-4">Plan</button>
      </div>
      <div className="relative min-h-0 flex-1 overflow-hidden bg-linear-to-b from-[#dce7f8] via-[#efefef] to-[#dce7f8]">
        <Grid />
        <ViewPanel />
        <div className="absolute bottom-px left-[305px] h-4 w-[77px] rounded-sm bg-linear-to-b from-[#a0a4aa]/60 to-[#5a5e63]/95 text-center text-[13px] leading-4 text-[#c4c8cc] shadow-[0_0_3px_#888]">XY</div>
        <div className="absolute bottom-px left-[387px] flex h-4 w-[296px] items-center rounded-sm bg-linear-to-b from-[#a0a0a0]/70 via-[#828282]/95 to-[#4e4e4e] px-2 text-[13px] leading-4 text-white shadow-[0_0_3px_#777]">
          <span className="flex-1">Z = 0.00 m - <i>Story 2</i></span>
          <svg width="30" height="10" viewBox="0 0 30 10" fill="#8c8c8c"><path d="M0 10L5 0l5 10zM20 0h10l-5 10z" /></svg>
        </div>
        <div className="absolute right-0 bottom-px h-4 w-[105px] rounded-l-sm bg-[#a4abb7]/70 pl-10 text-[13px] leading-4 text-[#c8cfda] shadow-[0_0_3px_#b5bdca]">View</div>
      </div>
      <ViewBar />
    </main>
  );
}

function Annotations() {
  return (
    <div className="pointer-events-none absolute inset-0 overflow-hidden">
      <p className="absolute top-[341px] left-[451px] h-[63px] w-[674px] bg-white text-[21px] leading-6 whitespace-pre">
        How to change plan view to 3D view or make it back from 3D view ?
      </p>
      <p className="absolute top-[430px] left-[522px] h-[86px] w-[618px] bg-white text-[21px] leading-6 whitespace-pre">
        {'I some times lost the "Plan" (it means Plan becomes 3D view),\nand I did not  know how to take it back again.'}
      </p>
      <svg className="absolute inset-0 h-full w-full" aria-hidden="true">
        <g transform="translate(0 520) scale(.33333)" fill="none" stroke="#000" strokeWidth="3.300" strokeLinejoin="round">
          <path d="M902 76L840 80 770 105 720 128 690 155 660 180 640 215 620 240 605 265 602 360 615 390 630 410 660 425 700 437 730 455 760 470 860 475 905 470 935 455 955 440 985 410 983 345 990 310 1000 285 1020 245 1037 205 1025 165 1000 115 968 84 885 82 845 100 800 120 750 147 690 177 640 220 618 262 612 290 610 335" />
          <path d="M612 343L635 305 665 280 690 250 705 225 740 185 800 128 830 100 870 77 925 53 990 52 1020 66 1042 92 1040 200 1048 222 1048 315 1040 350 1030 385 1015 415 990 438 960 455 900 472 820 474 745 470 700 430 650 385 612 343" />
          <path d="M998 420V445" />
        </g>
        <g transform="translate(330 400) scale(.33333)" fill="none" stroke="#000" strokeWidth="3.300" strokeLinejoin="round">
          <path d="M-30 468L-25 440 0 413 50 368 95 333 125 312 170 260 205 222 230 200 250 170 290 130 315 85" />
          <path d="M-30 445L5 420 60 382 100 330 150 298 190 260 222 228 240 195 262 160 300 115 318 85" />
          <path d="M0 416L50 374 120 315 170 265 220 200 235 170 260 140 315 92" />
          <path d="M158 195L180 170 235 128 265 112 325 75M172 202L190 180 245 140 300 105 318 92M165 190L205 155 270 105 318 72" />
          <path d="M308 64V255L314 284 318 240V52M308 64H320M325 100V195L320 235V90" />
        </g>
        <g className="drop-shadow-[2px_2px_2px_#0009]">
          <path d="M264 126L332 241" stroke="#f00" strokeWidth="10" strokeLinecap="round" />
          <path d="M249 108L270 120 251 130z" fill="#f00" />
        </g>
      </svg>
    </div>
  );
}

export default function App() {
  return (
    <div className="relative flex h-screen flex-col overflow-hidden bg-[#ece9d8] font-['Liberation_Sans',Arial,sans-serif] text-black">
      <svg width="0" height="0" className="absolute" aria-hidden="true">
        <defs>
          <linearGradient id="paper" x1="0" y1="0" x2="1" y2="1"><stop stopColor="#fff" /><stop offset="1" stopColor="#a9d6f0" /></linearGradient>
          <linearGradient id="red" x1="0" y1="0" x2="1" y2="1"><stop stopColor="#fbc3c0" /><stop offset="1" stopColor="#d92f2f" /></linearGradient>
        </defs>
      </svg>
      <Header />
      <Toolbars />
      <div className="flex min-h-0 flex-1">
        <Inspector />
        <Workspace />
      </div>
      <footer className="flex h-[17px] shrink-0 items-stretch overflow-hidden border-t-2 border-[#aca899] text-[12px] leading-4">
        <button className="-ml-4 w-[52px] shrink-0 border-r border-[#716f64] pl-1 text-left">Forces</button>
        <button className="ml-1 w-[38px] bg-white text-left pl-0.5">Plan</button>
        <button className="ml-0.5 border-r border-l border-r-[#716f64] border-l-white px-0.5">Displacements</button>
      </footer>
      <Annotations />
    </div>
  );
}
